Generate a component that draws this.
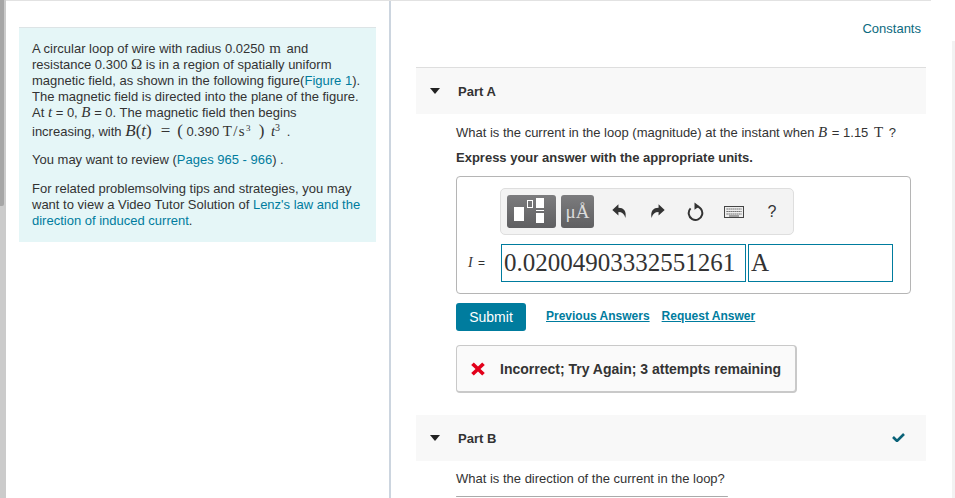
<script>
</script>

<div class="page">
  <div class="scroll"><div class="thumb"></div></div>
  <div class="topline"></div>
  <div class="edge"></div>
  <aside class="left">
    <div class="intro">
      <p>A circular loop of wire with radius 0.0250 <span class="m wide-m">m</span> and resistance 0.300 <span class="m">Ω</span> is in a region of spatially uniform magnetic field, as shown in the following figure(<a href="#f">Figure 1</a>). The magnetic field is directed into the plane of the figure. At <i class="m">t</i> = 0, <i class="m">B</i> = 0. The magnetic field then begins increasing, with<span class="strut"></span> <span class="eq"><i>B</i>(<i>t</i>)<span class="eqs">=</span>(</span> 0.390 <span class="m unit-t">T/s<sup>3</sup></span> <span class="eq close">)</span> <i class="m">t</i><sup class="tsup">3</sup> <span class="dot">.</span></p>
      <p>You may want to review (<a href="#p">Pages 965 - 966</a>) .</p>
      <p class="tips">For related problemsolving tips and strategies, you may want to view a Video Tutor Solution of <a href="#l">Lenz's law and the direction of induced current</a>.</p>
    </div>
  </aside>
  <main class="right">
    <div class="constants"><a href="#c">Constants</a></div>
    <section class="part first">
      <span class="caret"></span><h2>Part A</h2>
    </section>
    <div class="body">
      <p class="q">What is the current in the loop (magnitude) at the instant when <i class="m qb">B</i> = 1.15 <span class="m qt">T</span> ?</p>
      <p class="exp">Express your answer with the appropriate units.</p>
      <div class="answer">
        <div class="toolbar">
          <div class="tb-btn wide">
            <svg width="49" height="33" viewBox="0 0 49 33">
              <rect x="7" y="12" width="10" height="14" fill="#fff"/>
              <rect x="20.5" y="5.5" width="5" height="7" fill="none" stroke="#fff" stroke-width="1"/>
              <rect x="29" y="3" width="8" height="10" fill="#fff"/>
              <rect x="29" y="15" width="8" height="1" fill="#fff"/>
              <rect x="29" y="18" width="8" height="10" fill="#fff"/>
            </svg>
          </div>
          <div class="tb-btn unit">μÅ</div>
          <div class="icons">
            <span class="slot"><svg width="15" height="15" viewBox="0 0 14 14"><path d="M0.3 5.5 L6 0.3 V3.5 C11 3.5 13.8 6.5 12.5 13 C11.5 9.3 9.5 7.5 6 7.5 V10.7Z" fill="#333"/></svg></span>
            <span class="slot"><svg width="15" height="15" viewBox="0 0 14 14"><path d="M13.7 5.5 L8 0.3 V3.5 C3 3.5 0.2 6.5 1.5 13 C2.5 9.3 4.5 7.5 8 7.5 V10.7Z" fill="#333"/></svg></span>
            <span class="slot"><svg width="17" height="19" viewBox="0 0 17 19"><path d="M8.5 4.3 A6.8 6.8 0 1 1 3.6 6.4" fill="none" stroke="#333" stroke-width="2"/><path d="M7.5 0.5 L12.5 4.2 L7.5 7.8Z" fill="#333"/></svg></span>
            <span class="slot"><svg width="20" height="12" viewBox="0 0 20 12"><rect x="0.5" y="0.5" width="19" height="11" fill="#eee" stroke="#444"/><path d="M2.5 3H17.5M2.5 5.5H17.5M2.5 8H17.5" stroke="#555" stroke-dasharray="1.3 .7"/><path d="M5 10H15" stroke="#555"/></svg></span>
            <span class="slot help">?</span>
          </div>
        </div>
        <div class="row">
          <span class="label"><i>I</i> =</span>
          <span class="field val">0.02004903332551261</span>
          <span class="field unitf">A</span>
        </div>
      </div>
      <div class="actions">
        <button class="submit">Submit</button>
        <a href="#a" class="lnk">Previous Answers</a>
        <a href="#b" class="lnk">Request Answer</a>
      </div>
      <div class="feedback">
        <svg width="14" height="14" viewBox="0 0 14 14"><path d="M2.8 .4 L7 4.6 L11.2 .4 L13.8 3 L9.5 7 L13.8 11 L11.2 13.6 L7 9.4 L2.8 13.6 L.2 11 L4.5 7 L.2 3Z" fill="#e2001a"/></svg>
        <span>Incorrect; Try Again; 3 attempts remaining</span>
      </div>
    </div>
    <section class="part second">
      <span class="caret"></span><h2>Part B</h2>
      <svg class="check" width="13" height="10" viewBox="0 0 13 10"><path d="M1 5 L5 9 L12 2" fill="none" stroke="#0a6278" stroke-width="2.6"/></svg>
    </section>
    <div class="body">
      <p class="q dir">What is the direction of the current in the loop?</p>
      <div class="stub"></div>
    </div>
  </main>
</div>

<style>
  :global(body) { margin: 0; background: #fff; }
  .page { position: relative; display: flex; width: 955px; height: 498px; overflow: hidden; font-family: "Liberation Sans", Arial, sans-serif; color: #333; font-size: 13px; }
  p { margin: 0; }
  a { color: #007c9e; text-decoration: none; }
  .scroll { position: absolute; left: 0; top: 0; bottom: 0; width: 6px; background: #cbcbcb; }
  .thumb { height: 206px; width: 4px; background: #a6a6a6; border-radius: 0 0 2px 0; }
  .topline { position: absolute; left: 6px; top: 0; width: 925px; height: 1px; background: #e2e2e2; }
  .edge { position: absolute; left: 952px; top: 41px; bottom: 0; width: 3px; background: #f2f2f2; }
  .left { width: 391px; flex: none; box-sizing: border-box; padding: 27px 13px 0 19px; border-right: 2px solid #ccd5df; }
  .intro { background: #e5f6f7; border-top: 1px solid #dde4e6; padding: 13px 13px; line-height: 16px; height: 215px; box-sizing: border-box; }
  .intro p + p { margin-top: 12px; }
  .intro p.tips { margin-top: 13px; }
  .strut { display: inline-block; width: 0; height: 14.5px; }
  .m { font-family: "Liberation Serif", serif; font-size: 15px; line-height: 0; }
  .wide-m { margin: 0 2px 0 1px; }
  .eq { font-family: "Liberation Serif", serif; font-size: 17px; line-height: 0; }
  .eqs { margin: 0 7px 0 9px; }
  .unit-t { letter-spacing: 1.4px; }
  .close { margin-left: 3px; margin-right: 3px; }
  .dot { margin-left: 3px; }
  sup { font-size: 9px; line-height: 0; vertical-align: 5px; }
  .tsup { font-family: "Liberation Serif", serif; font-size: 10px; }
  .right { flex: 1; min-width: 0; padding: 0 29px 0 25px; }
  .constants { text-align: right; height: 67px; padding: 21px 5px 0 0; box-sizing: border-box; line-height: 16px; }
  .constants a { color: #0b6a80; }
  .part { display: flex; align-items: center; height: 46px; background: #f8f8f8; position: relative; padding-left: 14px; }
  .part.first { border-top: 1px solid #dedede; }
  h2 { margin: 0 0 0 18px; font-size: 13px; font-weight: 700; color: #333; }
  .caret { width: 0; height: 0; border-left: 5.5px solid transparent; border-right: 5.5px solid transparent; border-top: 6px solid #222; }
  .check { position: absolute; right: 21px; top: 17px; }
  .body { padding: 0 0 0 40px; }
  .q { margin-top: 11px; line-height: 16px; }
  .qb { margin-right: 1px; }
  .qt { margin: 0 2px 0 2px; }
  .exp { font-weight: 700; margin-top: 9px; line-height: 16px; }
  .answer { width: 455px; height: 118px; margin-top: 10px; box-sizing: border-box; border: 1px solid #b5b5b5; border-radius: 4px; padding: 11px 0 0 43px; }
  .toolbar { display: flex; align-items: center; gap: 5px; width: 294px; height: 47px; box-sizing: border-box; padding: 0 0 0 6px; background: #f3f3f3; border: 1px solid #dedede; border-radius: 5px; }
  .tb-btn { height: 33px; border-radius: 3px; background: linear-gradient(#7c7c7e, #5f5f61); display: flex; align-items: center; justify-content: center; color: #fff; }
  .wide { width: 49px; }
  .unit { width: 33px; font-family: "Liberation Serif", serif; font-size: 19px; color: #dcdcdc; }
  .icons { display: flex; align-items: center; margin-left: 1px; }
  .slot { display: flex; align-items: center; justify-content: center; width: 38.2px; }
  .help { font-size: 16px; }
  .row { display: flex; align-items: center; margin-top: 9px; margin-left: -33px; }
  .label { width: 33px; padding-left: 1px; box-sizing: border-box; font-size: 12px; word-spacing: 2px; }
  .label i { font-family: "Liberation Serif", serif; font-size: 14px; }
  .field { box-sizing: border-box; height: 38px; border: 1px solid #007c9e; font-family: "Liberation Serif", serif; font-size: 25px; line-height: 36px; padding-left: 2px; color: #333; }
  .val { width: 245px; margin-left: 1px; }
  .unitf { width: 145px; margin-left: 2px; }
  .actions { display: flex; align-items: center; margin-top: 9px; }
  .submit { width: 70px; height: 28px; background: #007c9e; color: #fff; border: none; border-radius: 3px; font: 500 14px "Liberation Sans", sans-serif; padding: 0; }
  .lnk { font-size: 12px; font-weight: 700; text-decoration: underline; margin-left: 12px; margin-top: -2px; }
  .submit + .lnk { margin-left: 20px; }
  .feedback { display: inline-flex; align-items: center; gap: 15px; margin-top: 14px; height: 48px; width: 341px; box-sizing: border-box; padding-left: 14px; border: 1px solid #c9c9c9; border-bottom-width: 2px; border-right-width: 2px; border-radius: 4px; background: #fafafa; font-weight: 700; font-size: 14px; white-space: nowrap; }
  .second { margin-top: 22px; }
  .dir { margin-top: 10px; }
  .stub { width: 272px; height: 1px; background: #aaa; margin-top: 9px; border-radius: 2px; }
</style>
